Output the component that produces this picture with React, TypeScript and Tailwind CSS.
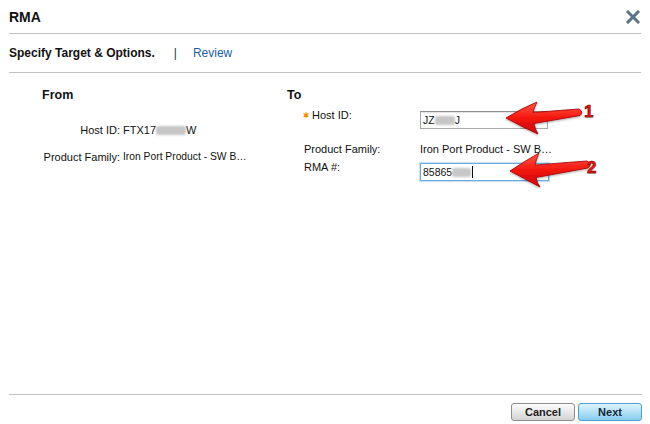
import React from "react";

function Blob({ w }: { w: number }) {
  return (
    <span
      className="inline-block h-[9px] bg-[#c6c6c6] blur-[1.2px] rounded-[2px] align-[-1px]"
      style={{ width: w }}
    />
  );
}

export default function App() {
  return (
    <div className="relative w-[650px] h-[424px] bg-white overflow-hidden font-['Liberation_Sans',Arial,sans-serif] text-[#111]">
      <div className="mx-[9px] h-full flex flex-col">
        {/* Header */}
        <div className="h-[34px] shrink-0 border-b border-[#c2c2c2] flex items-center justify-between">
          <div className="text-[14px] font-bold leading-none mt-[1px]">RMA</div>
          <svg width="14" height="14" viewBox="0 0 14 14" className="mr-[1px] mt-[1px]">
            <path d="M2 2 L12 12 M12 2 L2 12" stroke="#5c7286" strokeWidth="3" strokeLinecap="square" />
          </svg>
        </div>
        {/* Tabs */}
        <div className="h-[39px] shrink-0 border-b border-[#c2c2c2] flex items-center text-[12px]">
          <span className="font-bold">Specify Target &amp; Options.</span>
          <span className="ml-[19px] text-[#333]">|</span>
          <span className="ml-[16px] text-[#1a5fa0]">Review</span>
        </div>
        {/* Content */}
        <div className="flex-1 flex">
          {/* From */}
          <div className="ml-[33px] w-[245px] pt-[15px]">
            <div className="text-[12.5px] font-bold leading-[14px]">From</div>
            <div className="mt-[21px] grid grid-cols-[78px_auto] gap-x-[3px] gap-y-[13px] leading-[14px]">
              <div className="text-right text-[11px]">Host ID:</div>
              <div className="text-[11px] whitespace-nowrap">
                FTX17
                <Blob w={30} />W
              </div>
              <div className="text-right text-[11px] whitespace-nowrap">Product Family:</div>
              <div className="text-[10.3px] whitespace-nowrap">Iron Port Product - SW B…</div>
            </div>
          </div>
          {/* To */}
          <div className="pt-[15px]">
            <div className="text-[12.5px] font-bold leading-[14px]">To</div>
            <div className="mt-[6px] flex items-start">
              <div className="w-[117px] ml-[16px] flex items-center text-[11px] leading-[14px]">
                <span className="w-[9px] flex items-center">
                  <svg width="6" height="6" viewBox="0 0 6 6">
                    <path d="M3 0.3 V5.7 M0.6 1.6 L5.4 4.4 M5.4 1.6 L0.6 4.4" stroke="#f08a00" strokeWidth="1.2" />
                  </svg>
                </span>
                <span>Host ID:</span>
              </div>
              <div className="mt-[3px] w-[128px] h-[18px] border border-[#a9a9a9] border-t-[#8f8f8f] bg-white flex items-center pl-[2px] text-[10.5px] leading-none shadow-[inset_0_1px_1px_rgba(0,0,0,0.12)]">
                JZ
                <Blob w={20} />J
              </div>
            </div>
            <div className="mt-[13px] flex items-start text-[11px] leading-[14px]">
              <div className="w-[117px] ml-[17px]">Product Family:</div>
              <div className="-ml-[1px] whitespace-nowrap">Iron Port Product - SW B…</div>
            </div>
            <div className="mt-[4px] flex items-start">
              <div className="w-[117px] ml-[17px] text-[11px] leading-[14px]">RMA #:</div>
              <div className="mt-[3px] -ml-[1px] w-[129px] h-[18px] border border-[#6aa9de] bg-white flex items-center pl-[2px] text-[10.5px] leading-none shadow-[0_0_1px_1px_rgba(110,170,225,0.35)]">
                85865
                <Blob w={19} />
                <span className="inline-block w-[1px] h-[12px] bg-black ml-[1px]" />
              </div>
            </div>
          </div>
        </div>
        {/* Footer */}
        <div className="h-[30px] shrink-0 border-t border-[#c2c2c2] flex justify-end items-start pt-[8px] gap-[3px] -mr-[1px]">
          <button className="w-[64px] h-[18px] rounded-[3px] border border-[#8e8e8e] bg-gradient-to-b from-[#fdfdfd] to-[#d4d4d4] text-[11px] font-bold text-[#222] leading-none">
            Cancel
          </button>
          <button className="w-[64px] h-[18px] rounded-[3px] border border-[#4f9fd0] bg-gradient-to-b from-[#dff3fc] to-[#86cdee] text-[11px] font-bold text-[#16283a] leading-none">
            Next
          </button>
        </div>
      </div>

      {/* Annotation arrows */}
      <svg className="absolute left-0 top-0 pointer-events-none" width="650" height="424" viewBox="0 0 650 424">
        <defs>
          <linearGradient id="ar" x1="0" y1="0" x2="0" y2="1">
            <stop offset="0" stopColor="#ff5a4a" />
            <stop offset="0.5" stopColor="#f3160e" />
            <stop offset="1" stopColor="#c8060a" />
          </linearGradient>
          <filter id="sh" x="-20%" y="-40%" width="140%" height="180%">
            <feDropShadow dx="0" dy="1" stdDeviation="1" floodColor="#000" floodOpacity="0.35" />
          </filter>
        </defs>
        <path
          d="M506 118 Q522 108 537 102 Q534 108 533 112.5 L579 109 Q584 112 580 115.5 L534 123.5 Q535 129 538 134 Q522 127 506 118 Z"
          fill="url(#ar)"
          stroke="#a30006"
          strokeWidth="0.8"
          filter="url(#sh)"
        />
        <path
          d="M510 171 Q525 161 539 153 Q536 160 535 165 L587 161 Q593 164 588 168 L536 177.5 Q537 183 540 187 Q525 179 510 171 Z"
          fill="url(#ar)"
          stroke="#a30006"
          strokeWidth="0.8"
          filter="url(#sh)"
        />
      </svg>
      <div className="absolute left-[584px] top-[103px] text-[17px] font-bold text-[#f0190f] leading-none [-webkit-text-stroke:0.6px_#7a0004] [text-shadow:0_1px_1px_rgba(0,0,0,0.35)]">
        1
      </div>
      <div className="absolute left-[587px] top-[159px] text-[17px] font-bold text-[#f0190f] leading-none [-webkit-text-stroke:0.6px_#7a0004] [text-shadow:0_1px_1px_rgba(0,0,0,0.35)]">
        2
      </div>
    </div>
  );
}
